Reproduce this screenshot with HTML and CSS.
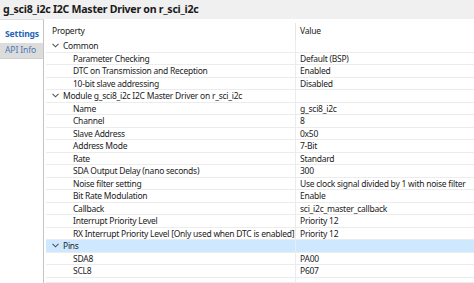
FILE: index.html
```html
<!DOCTYPE html>
<html>
<head>
<meta charset="utf-8">
<link rel="stylesheet" href="styles.css">
</head>
<body>
<div class="title">g_sci8_i2c I2C Master Driver on r_sci_i2c</div>
<div class="main">
  <div class="tabs">
    <div class="tab active">Settings</div>
    <div class="tab">API Info</div>
  </div>
  <div class="tree">
    <div class="head">
      <div class="hcell">Property</div>
      <div class="hcell hval">Value</div>
    </div>
    <div class="row group"><div class="c1"><svg class="chev" width="7" height="5" viewBox="0 0 7 5"><polyline points="0.5,0.8 3.5,3.8 6.5,0.8" fill="none" stroke="#555" stroke-width="1.1"/></svg>Common</div><div class="c2"></div></div>
    <div class="row"><div class="c1 leaf">Parameter Checking</div><div class="c2">Default (BSP)</div></div>
    <div class="row"><div class="c1 leaf">DTC on Transmission and Reception</div><div class="c2">Enabled</div></div>
    <div class="row"><div class="c1 leaf">10-bit slave addressing</div><div class="c2">Disabled</div></div>
    <div class="row group"><div class="c1"><svg class="chev" width="7" height="5" viewBox="0 0 7 5"><polyline points="0.5,0.8 3.5,3.8 6.5,0.8" fill="none" stroke="#555" stroke-width="1.1"/></svg>Module g_sci8_i2c I2C Master Driver on r_sci_i2c</div><div class="c2"></div></div>
    <div class="row"><div class="c1 leaf">Name</div><div class="c2">g_sci8_i2c</div></div>
    <div class="row"><div class="c1 leaf">Channel</div><div class="c2">8</div></div>
    <div class="row"><div class="c1 leaf">Slave Address</div><div class="c2">0x50</div></div>
    <div class="row"><div class="c1 leaf">Address Mode</div><div class="c2">7-Bit</div></div>
    <div class="row"><div class="c1 leaf">Rate</div><div class="c2">Standard</div></div>
    <div class="row"><div class="c1 leaf">SDA Output Delay (nano seconds)</div><div class="c2">300</div></div>
    <div class="row"><div class="c1 leaf">Noise filter setting</div><div class="c2">Use clock signal divided by 1 with noise filter</div></div>
    <div class="row"><div class="c1 leaf">Bit Rate Modulation</div><div class="c2">Enable</div></div>
    <div class="row"><div class="c1 leaf">Callback</div><div class="c2">sci_i2c_master_callback</div></div>
    <div class="row"><div class="c1 leaf">Interrupt Priority Level</div><div class="c2">Priority 12</div></div>
    <div class="row"><div class="c1 leaf">RX Interrupt Priority Level [Only used when DTC is enabled]</div><div class="c2">Priority 12</div></div>
    <div class="row group sel"><div class="c1"><svg class="chev" width="7" height="5" viewBox="0 0 7 5"><polyline points="0.5,0.8 3.5,3.8 6.5,0.8" fill="none" stroke="#555" stroke-width="1.1"/></svg>Pins</div><div class="c2"></div></div>
    <div class="row"><div class="c1 leaf">SDA8</div><div class="c2">PA00</div></div>
    <div class="row"><div class="c1 leaf">SCL8</div><div class="c2">P607</div></div>
    <div class="row"><div class="c1 leaf"></div><div class="c2"></div></div>
  </div>
</div>
</body>
</html>
```
FILE: styles.css
```css
html, body {
  margin: 0;
  padding: 0;
  background: #ffffff;
  overflow: hidden;
}
body {
  width: 474px;
  height: 283px;
  font-family: "Noto Sans", "Open Sans", sans-serif;
  font-size: 8.5px;
  letter-spacing: -0.25px;
  color: #222222;
}
.title {
  height: 19px;
  line-height: 19px;
  background: #f0f0f0;
  padding-left: 3px;
  font-weight: 700;
  font-size: 10.6px;
  letter-spacing: -0.27px;
  color: #1a1a1a;
  white-space: nowrap;
}
.main {
  display: flex;
  height: 264px;
}
.tabs {
  width: 44px;
  flex: none;
  border-right: 1px solid #c4c4c4;
  padding-top: 5px;
  box-sizing: border-box;
  border-top: 1px solid #dedede;
}
.tab {
  height: 15px;
  line-height: 15px;
  padding-left: 5px;
  font-size: 8.6px;
  letter-spacing: -0.15px;
  color: #4a79b4;
  background: #dcdcdc;
  border-bottom: 1px solid #cfcfcf;
}
.tab.active {
  height: 18px;
  line-height: 18px;
  background: #ffffff;
  color: #2465b8;
  font-weight: 700;
  border-bottom: none;
}
.tree {
  flex: 1;
  margin-left: 2px;
  display: flex;
  flex-direction: column;
}
.head {
  display: grid;
  grid-template-columns: 249px 1fr;
  height: 21px;
}
.hcell {
  padding-left: 6px;
  line-height: 24px;
}
.hval {
  padding-left: 4px;
  border-left: 1px solid #e6e6e6;
  margin-top: 4px;
  line-height: 16px;
}
.row {
  display: grid;
  grid-template-columns: 249px 1fr;
  height: 12.55px;
  box-sizing: border-box;
  border-bottom: 1px solid #ececec;
  white-space: nowrap;
  line-height: 11.5px;
}
.row.sel {
  background: #cde8ff;
}
.c1 {
  padding-left: 6px;
  display: flex;
  align-items: center;
  overflow: hidden;
}
.c1.leaf {
  padding-left: 27px;
}
.c2 {
  padding-left: 4px;
  border-left: 1px solid #ececec;
  overflow: hidden;
  display: flex;
  align-items: center;
}
.chev {
  margin-right: 4px;
  flex: none;
}
```
